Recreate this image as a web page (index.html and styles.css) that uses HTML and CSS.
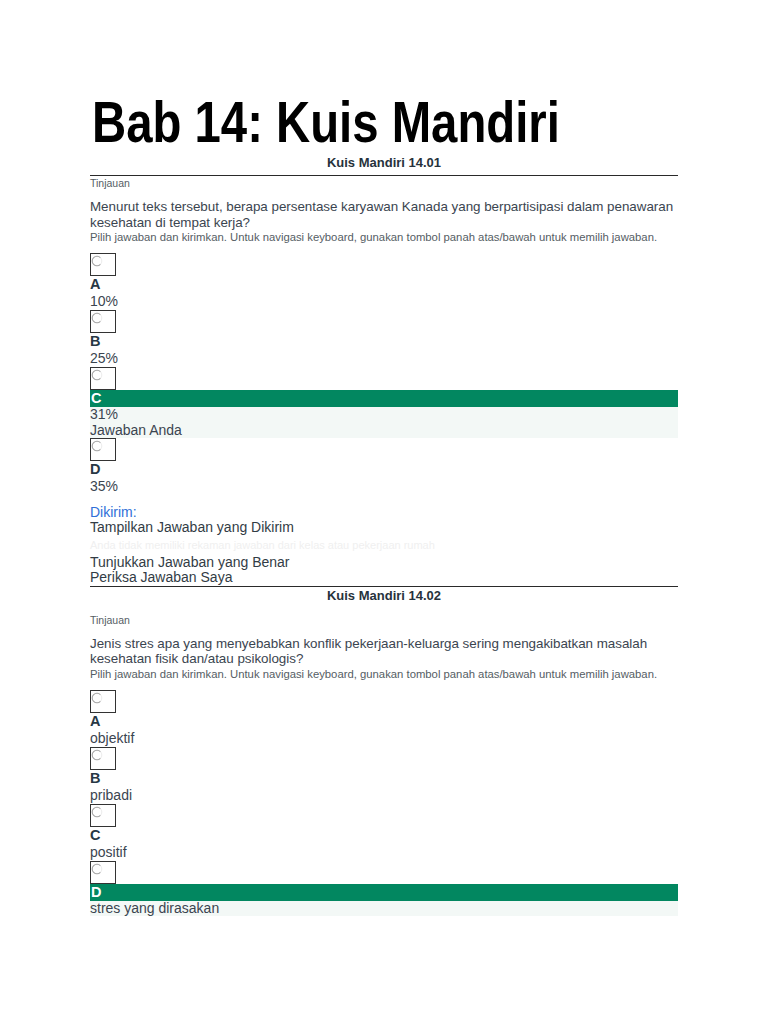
FILE: index.html
```html
<!DOCTYPE html>
<html lang="id">
<head>
<meta charset="utf-8">
<title>Bab 14: Kuis Mandiri</title>
<link rel="stylesheet" href="styles.css">
</head>
<body>
<main class="page">
  <h1 class="title">Bab 14: Kuis Mandiri</h1>

  <section class="quiz">
    <h2 class="quiz-head">Kuis Mandiri 14.01</h2>
    <div class="review">Tinjauan</div>
    <p class="question">Menurut teks tersebut, berapa persentase karyawan Kanada yang berpartisipasi dalam penawaran kesehatan di tempat kerja?</p>
    <p class="hint">Pilih jawaban dan kirimkan. Untuk navigasi keyboard, gunakan tombol panah atas/bawah untuk memilih jawaban.</p>
    <div class="options">
      <div class="option">
        <span class="radio"><svg viewBox="0 0 12 12" width="12" height="12"><circle cx="6" cy="6" r="4.8" fill="none" stroke="#ececec" stroke-width="1"/><path d="M9.4 2.6A4.8 4.8 0 1 0 9.4 9.4" fill="none" stroke="#a9a9a9" stroke-width="1.1"/></svg></span>
        <div class="letter">A</div>
        <div class="answer">10%</div>
      </div>
      <div class="option">
        <span class="radio"><svg viewBox="0 0 12 12" width="12" height="12"><circle cx="6" cy="6" r="4.8" fill="none" stroke="#ececec" stroke-width="1"/><path d="M9.4 2.6A4.8 4.8 0 1 0 9.4 9.4" fill="none" stroke="#a9a9a9" stroke-width="1.1"/></svg></span>
        <div class="letter">B</div>
        <div class="answer">25%</div>
      </div>
      <div class="option selected">
        <span class="radio"><svg viewBox="0 0 12 12" width="12" height="12"><circle cx="6" cy="6" r="4.8" fill="none" stroke="#ececec" stroke-width="1"/><path d="M9.4 2.6A4.8 4.8 0 1 0 9.4 9.4" fill="none" stroke="#a9a9a9" stroke-width="1.1"/></svg></span>
        <div class="letter">C</div>
        <div class="answer-box">
          <div class="answer">31%</div>
          <div class="answer">Jawaban Anda</div>
        </div>
      </div>
      <div class="option">
        <span class="radio"><svg viewBox="0 0 12 12" width="12" height="12"><circle cx="6" cy="6" r="4.8" fill="none" stroke="#ececec" stroke-width="1"/><path d="M9.4 2.6A4.8 4.8 0 1 0 9.4 9.4" fill="none" stroke="#a9a9a9" stroke-width="1.1"/></svg></span>
        <div class="letter">D</div>
        <div class="answer">35%</div>
      </div>
    </div>
    <div class="submitted">Dikirim:</div>
    <div class="action">Tampilkan Jawaban yang Dikirim</div>
    <div class="faint">Anda tidak memiliki rekaman jawaban dari kelas atau pekerjaan rumah</div>
    <div class="action">Tunjukkan Jawaban yang Benar</div>
    <div class="action">Periksa Jawaban Saya</div>
  </section>

  <section class="quiz">
    <h2 class="quiz-head">Kuis Mandiri 14.02</h2>
    <div class="review spaced">Tinjauan</div>
    <p class="question">Jenis stres apa yang menyebabkan konflik pekerjaan-keluarga sering mengakibatkan masalah kesehatan fisik dan/atau psikologis?</p>
    <p class="hint">Pilih jawaban dan kirimkan. Untuk navigasi keyboard, gunakan tombol panah atas/bawah untuk memilih jawaban.</p>
    <div class="options">
      <div class="option">
        <span class="radio"><svg viewBox="0 0 12 12" width="12" height="12"><circle cx="6" cy="6" r="4.8" fill="none" stroke="#ececec" stroke-width="1"/><path d="M9.4 2.6A4.8 4.8 0 1 0 9.4 9.4" fill="none" stroke="#a9a9a9" stroke-width="1.1"/></svg></span>
        <div class="letter">A</div>
        <div class="answer">objektif</div>
      </div>
      <div class="option">
        <span class="radio"><svg viewBox="0 0 12 12" width="12" height="12"><circle cx="6" cy="6" r="4.8" fill="none" stroke="#ececec" stroke-width="1"/><path d="M9.4 2.6A4.8 4.8 0 1 0 9.4 9.4" fill="none" stroke="#a9a9a9" stroke-width="1.1"/></svg></span>
        <div class="letter">B</div>
        <div class="answer">pribadi</div>
      </div>
      <div class="option">
        <span class="radio"><svg viewBox="0 0 12 12" width="12" height="12"><circle cx="6" cy="6" r="4.8" fill="none" stroke="#ececec" stroke-width="1"/><path d="M9.4 2.6A4.8 4.8 0 1 0 9.4 9.4" fill="none" stroke="#a9a9a9" stroke-width="1.1"/></svg></span>
        <div class="letter">C</div>
        <div class="answer">positif</div>
      </div>
      <div class="option selected">
        <span class="radio"><svg viewBox="0 0 12 12" width="12" height="12"><circle cx="6" cy="6" r="4.8" fill="none" stroke="#ececec" stroke-width="1"/><path d="M9.4 2.6A4.8 4.8 0 1 0 9.4 9.4" fill="none" stroke="#a9a9a9" stroke-width="1.1"/></svg></span>
        <div class="letter">D</div>
        <div class="answer-box">
          <div class="answer">stres yang dirasakan</div>
        </div>
      </div>
    </div>
  </section>
</main>
</body>
</html>
```

FILE: styles.css
```css
html, body {
  margin: 0;
  padding: 0;
  background: #ffffff;
}

body {
  font-family: "Liberation Sans", Arial, sans-serif;
  color: #3b4550;
}

.page {
  width: 588px;
  margin: 0 0 0 90px;
  padding-top: 92px;
}

.title {
  margin: 0 0 0 2px;
  font-size: 57px;
  font-weight: 700;
  line-height: 60px;
  color: #000000;
  white-space: nowrap;
  transform: scaleX(0.83);
  transform-origin: left center;
}

.quiz-head {
  margin: 0;
  font-size: 13px;
  font-weight: 700;
  text-align: center;
  color: #27323c;
  line-height: 18px;
  padding: 2px 0 3px;
  border-bottom: 1.5px solid #2a2a2a;
}

.quiz + .quiz .quiz-head {
  border-bottom: none;
  border-top: 1.5px solid #2a2a2a;
  padding: 0 0 3px;
}

.review {
  font-size: 10.5px;
  line-height: 14px;
  color: #555d64;
  margin-bottom: 9px;
}

.review.spaced {
  padding-top: 5px;
}

.question {
  margin: 0;
  font-size: 13.4px;
  letter-spacing: -0.03px;
  line-height: 15.5px;
  color: #3b4550;
}

.hint {
  margin: 0 0 9px;
  font-size: 11.3px;
  line-height: 14px;
  color: #555d64;
}

.options {
  display: flex;
  flex-direction: column;
}

.option {
  display: flex;
  flex-direction: column;
}

.radio {
  box-sizing: border-box;
  width: 26px;
  height: 23px;
  border: 1.5px solid #333333;
  display: flex;
  align-items: flex-start;
  justify-content: flex-start;
  padding: 1px 0 0 0;
}

.letter {
  font-size: 14.5px;
  font-weight: 700;
  line-height: 17px;
  color: #283845;
}

.answer {
  font-size: 14px;
  line-height: 17px;
  color: #3b4550;
}

.answer-box .answer {
  line-height: 15.5px;
}

.selected .letter {
  background: #028760;
  color: #ffffff;
  padding-left: 1px;
}

.answer-box {
  background: #f3f8f6;
}

.submitted {
  margin-top: 9px;
  font-size: 14px;
  line-height: 16px;
  color: #3070d8;
}

.action {
  font-size: 14px;
  line-height: 15.5px;
  color: #323c45;
}

.faint {
  font-size: 11px;
  line-height: 19px;
  color: #f0f0f0;
}
```
